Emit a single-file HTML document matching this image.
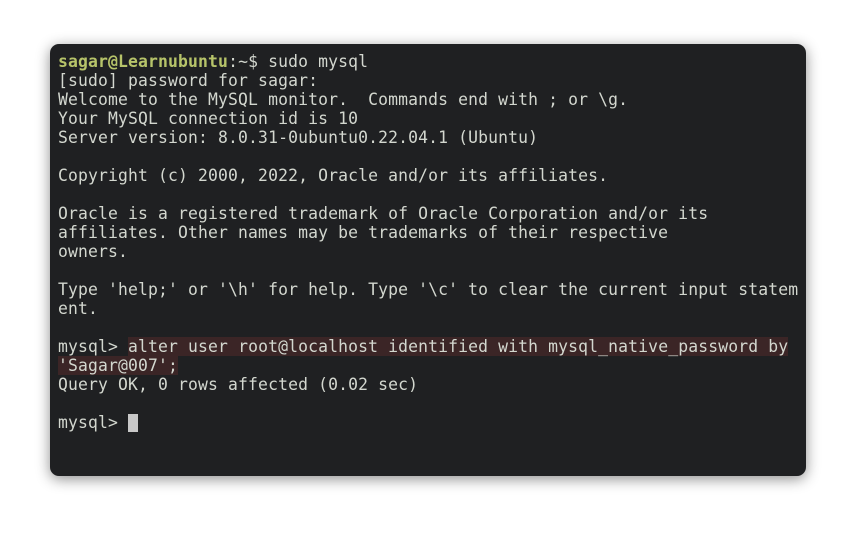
<!DOCTYPE html>
<html><head><style>
html,body{margin:0;padding:0;width:858px;height:534px;background:#fff;overflow:hidden}
.win{position:absolute;left:50px;top:44px;width:756px;height:432px;background:#1f2022;border-radius:9px;box-shadow:0 3px 14px rgba(0,0,0,.45)}
pre{position:absolute;left:8px;top:8px;margin:0;font-family:"DejaVu Sans Mono","Liberation Mono",monospace;font-size:16.4px;letter-spacing:0.135px;line-height:19px;color:#d3d7cf}
.g{color:#b7c46a;font-weight:bold}
.h{background:#3b2526}
.c{display:inline-block;width:10px;height:18px;background:#c8c8c8;vertical-align:-4px}
</style></head><body>
<div class="win"><pre><span class="g">sagar@Learnubuntu</span>:~$ sudo mysql
[sudo] password for sagar: 
Welcome to the MySQL monitor.  Commands end with ; or \g.
Your MySQL connection id is 10
Server version: 8.0.31-0ubuntu0.22.04.1 (Ubuntu)

Copyright (c) 2000, 2022, Oracle and/or its affiliates.

Oracle is a registered trademark of Oracle Corporation and/or its
affiliates. Other names may be trademarks of their respective
owners.

Type 'help;' or '\h' for help. Type '\c' to clear the current input statem
ent.

mysql&gt; <span class="h">alter user root@localhost identified with mysql_native_password by</span>
<span class="h">'Sagar@007';</span>
Query OK, 0 rows affected (0.02 sec)

mysql&gt; <span class="c"></span></pre></div>
</body></html>
